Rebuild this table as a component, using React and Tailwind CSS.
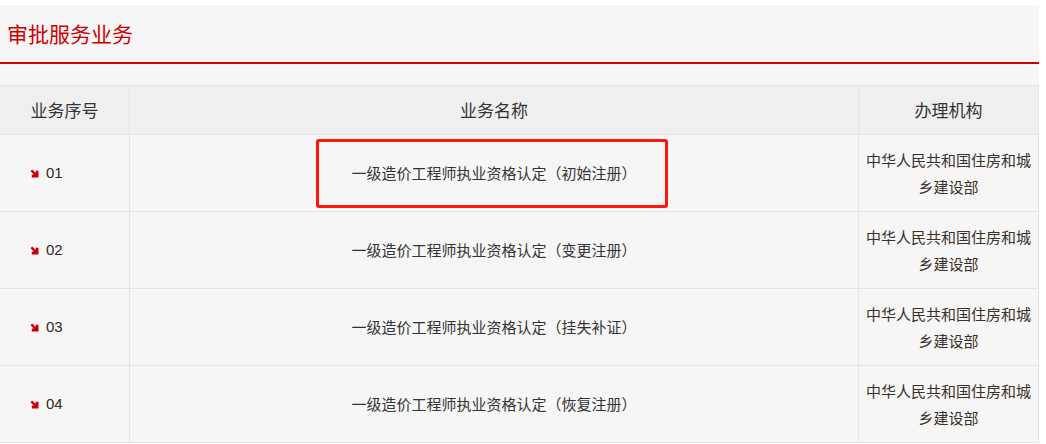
import React from 'react'

const rows = [
  { no: '01', name: '一级造价工程师执业资格认定（初始注册）', marked: true },
  { no: '02', name: '一级造价工程师执业资格认定（变更注册）' },
  { no: '03', name: '一级造价工程师执业资格认定（挂失补证）' },
  { no: '04', name: '一级造价工程师执业资格认定（恢复注册）' },
]

const font = { fontFamily: '"Microsoft YaHei", "Noto Sans CJK SC", sans-serif' }

const ArrowMark = () => (
  <svg width="9" height="9" viewBox="0 0 9 9" className="shrink-0">
    <path d="M0.5 2.2 L2.2 0.5 L5.6 3.9 V1.8 H8.5 V8.5 H1.8 V5.6 H3.9 Z" fill="#c8000b" />
  </svg>
)

const App = () => {
  return (
    <div className="h-[444px] w-[1046px] bg-white pt-[5px] text-[#333]" style={font}>
      <div className="w-[1039px] bg-[#f6f6f6]">
        <div className="flex h-[57px] items-center pl-[7px] text-[21px] text-[#cc0000]">审批服务业务</div>
        <div className="h-[2px] bg-[#cc0000]" />
        <div className="h-[21px]" />

        <div className="grid grid-cols-[130px_729px_180px] border-t border-[#e4e4e4]">
          <div className="flex h-[49px] items-center justify-center border-r border-b border-[#e4e4e4] bg-[#efefef] text-[17px]">业务序号</div>
          <div className="flex h-[49px] items-center justify-center border-r border-b border-[#e4e4e4] bg-[#efefef] text-[17px]">业务名称</div>
          <div className="flex h-[49px] items-center justify-center border-r border-b border-[#e4e4e4] bg-[#efefef] text-[17px]">办理机构</div>

          {rows.map((r) => (
            <React.Fragment key={r.no}>
              <div className="flex h-[77px] items-center gap-[7px] border-r border-b border-[#e4e4e4] pl-[30px] text-[15px] text-[#2b2b2b]">
                <ArrowMark />
                <span style={{ fontFamily: '"Liberation Sans", Arial, sans-serif' }}>{r.no}</span>
              </div>
              <div className="relative flex h-[77px] items-center justify-center border-r border-b border-[#e4e4e4] text-[15px]">
                {r.name}
                {r.marked && (
                  <div className="absolute top-[4px] right-[190px] bottom-[3px] left-[186px] rounded-[3px] border-[3px] border-[#ff160c]" />
                )}
              </div>
              <div className="flex h-[77px] items-center justify-center border-r border-b border-[#e4e4e4] px-[6px] text-center text-[15px] leading-[27px] text-[#3a3128]">
                中华人民共和国住房和城乡建设部
              </div>
            </React.Fragment>
          ))}
        </div>
      </div>
    </div>
  )
}

export default App
